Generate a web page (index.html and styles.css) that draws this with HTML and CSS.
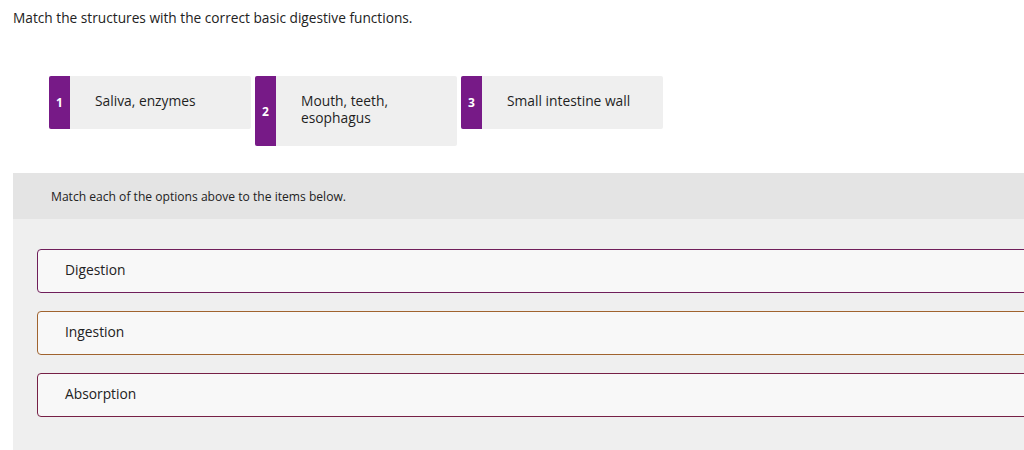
FILE: index.html
```html
<!DOCTYPE html>
<html>
<head>
<meta charset="utf-8">
<link rel="stylesheet" href="styles.css">
</head>
<body>
<div class="page">
  <p class="prompt">Match the structures with the correct basic digestive functions.</p>
  <div class="options">
    <div class="card"><div class="badge">1</div><div class="label">Saliva, enzymes</div></div>
    <div class="card"><div class="badge">2</div><div class="label">Mouth, teeth,<br>esophagus</div></div>
    <div class="card"><div class="badge">3</div><div class="label">Small intestine wall</div></div>
  </div>
  <div class="panel">
    <div class="panel-head">Match each of the options above to the items below.</div>
    <div class="panel-body">
      <div class="target t1">Digestion</div>
      <div class="target t2">Ingestion</div>
      <div class="target t3">Absorption</div>
    </div>
  </div>
</div>
</body>
</html>
```

FILE: styles.css
```css
html, body {
  margin: 0;
  padding: 0;
  background: #ffffff;
  overflow: hidden;
}
body {
  font-family: "Open Sans", Lato, Arial, sans-serif;
  color: #1c1c1c;
  font-variant-ligatures: none;
}
.page {
  width: 1040px;
  padding: 9px 0 0 13px;
}
.prompt {
  margin: 0;
  font-size: 13.7px;
  line-height: 18px;
  color: #222;
}
.options {
  display: flex;
  align-items: flex-start;
  gap: 4px;
  margin: 49px 0 0 36px;
}
.card {
  width: 202px;
  display: flex;
  align-items: stretch;
  background: #efefef;
  border-radius: 2px;
  overflow: hidden;
}
.badge {
  width: 21px;
  flex: none;
  background: #771a87;
  color: #fff;
  font-weight: 700;
  font-size: 12px;
  display: flex;
  align-items: center;
  justify-content: center;
}
.label {
  padding: 16px 0 20px 25px;
  font-size: 13.8px;
  line-height: 17px;
  color: #1f1f1f;
}
.panel {
  margin-top: 27px;
  background: #efefef;
  height: 290px;
}
.panel-head {
  background: #e4e4e4;
  height: 46px;
  display: flex;
  align-items: center;
  padding-left: 38px;
  font-size: 12.1px;
  color: #222;
}
.panel-body {
  padding: 30px 0 0 24px;
  display: flex;
  flex-direction: column;
  gap: 18px;
}
.target {
  height: 39px;
  background: #f8f8f8;
  border: 1px solid #6e1d5c;
  border-radius: 4px;
  display: flex;
  align-items: center;
  padding: 0 0 3px 27px;
  font-size: 13.8px;
  color: #222;
}
.t1 { border-color: #6f1e5a; }
.t2 { border-color: #a0632e; }
.t3 { border-color: #762046; }
```
